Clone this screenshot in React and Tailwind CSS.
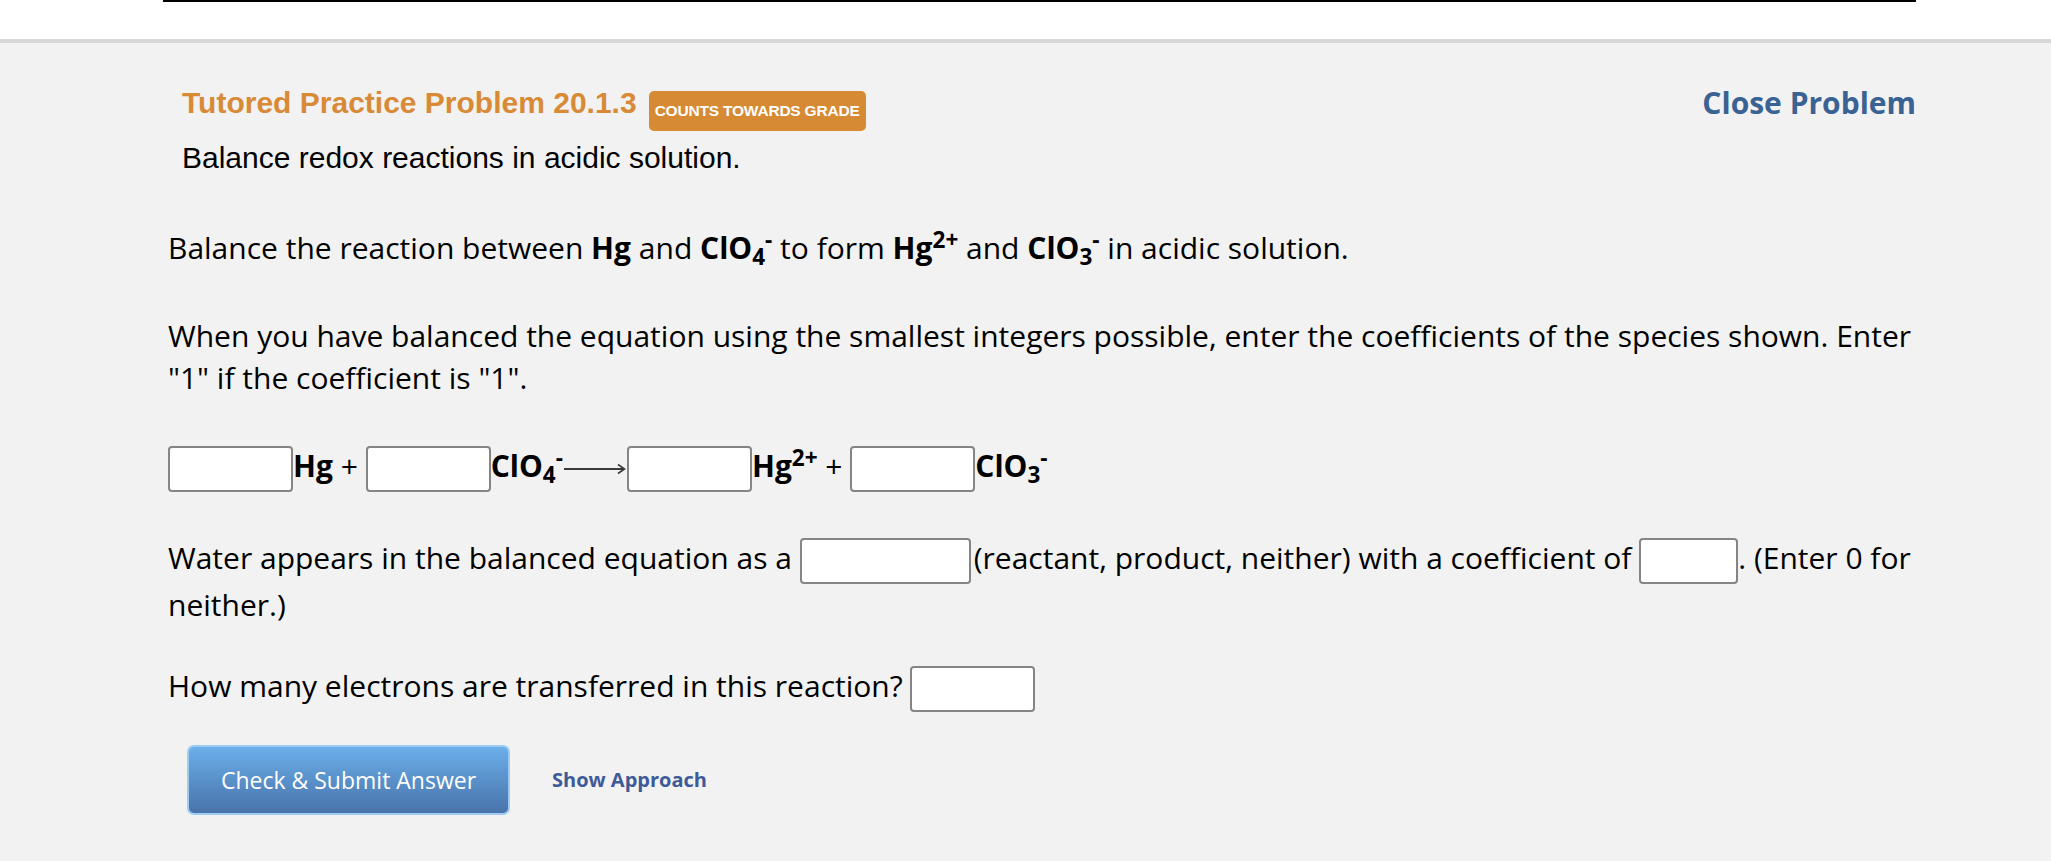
import React from 'react';
import clsx from 'clsx';

function Box({ className = 'w-[125px]' }) {
    return (
        <input
            type="text"
            className={clsx(
                'inline-block h-[46px] px-2 align-middle rounded-[4px] border-2 border-[#858585] bg-white outline-none',
                className
            )}
        />
    );
}

function Arrow() {
    return (
        <svg width="64" height="14" viewBox="0 0 64 14" className="inline-block align-middle">
            <path d="M1 7 H61" stroke="#3a3a3a" strokeWidth="1.8" fill="none" />
            <path d="M55 2.5 L61.5 7 L55 11.5" stroke="#3a3a3a" strokeWidth="1.6" fill="none" />
        </svg>
    );
}

export default function App() {
    return (
        <div className="min-h-screen bg-[#f2f2f2] text-black font-['Open_Sans',sans-serif]">
            <div className="bg-white h-[43px] border-b-4 border-[#d7d7d7]">
                <div className="ml-[163px] w-[1753px] h-[2px] bg-black" />
            </div>

            <div className="ml-[168px] w-[1748px] pt-[39px] pb-10">
                <div className="flex items-start justify-between">
                    <div className="flex items-start mt-[4px] pl-[14px]">
                        <h1 className="text-[30px] leading-[34px] font-bold text-[#d88a37] font-['Liberation_Sans',Arial,sans-serif]">
                            Tutored Practice Problem 20.1.3
                        </h1>
                        <span className="ml-[12px] mt-[5px] h-[40px] px-[6px] flex items-center rounded-[5px] bg-[#d68a33] text-white text-[15.5px] font-bold tracking-[-0.2px] font-['Liberation_Sans',Arial,sans-serif]">
                            COUNTS TOWARDS GRADE
                        </span>
                    </div>
                    <a className="text-[30px] leading-[41px] font-bold text-[#3a6293]">Close Problem</a>
                </div>

                <p className="mt-[10px] pl-[14px] text-[30px] leading-[34px] font-['Liberation_Sans',Arial,sans-serif]">
                    Balance redox reactions in acidic solution.
                </p>

                <div className="text-[30px] leading-[42px]">
                    <p className="mt-[52px]">
                        Balance the reaction between <b>Hg</b> and <b>ClO<sub>4</sub><sup>-</sup></b> to form{' '}
                        <b>Hg<sup>2+</sup></b> and <b>ClO<sub>3</sub><sup>-</sup></b> in acidic solution.
                    </p>

                    <p className="mt-[46px]">
                        When you have balanced the equation using the smallest integers possible, enter the
                        coefficients of the species shown. Enter "1" if the coefficient is "1".
                    </p>

                    <p className="mt-[46px]">
                        <Box /><b>Hg</b> + <Box /><b>ClO<sub>4</sub><sup>-</sup></b><Arrow /><Box />
                        <b>Hg<sup>2+</sup></b> + <Box /><b>ClO<sub>3</sub><sup>-</sup></b>
                    </p>

                    <p className="mt-[45px]">
                        Water appears in the balanced equation as a <Box className="w-[171px] mr-[3px]" />
                        (reactant, product, neither) with a coefficient of <Box className="w-[99px]" />. (Enter 0
                        for neither.)
                    </p>

                    <p className="mt-[39px]">
                        How many electrons are transferred in this reaction? <Box />
                    </p>
                </div>

                <div className="mt-[33px] ml-[19px] flex items-center">
                    <button className="w-[323px] h-[70px] rounded-[7px] border-2 border-[#9dcbf1] bg-linear-to-b from-[#6cafea] to-[#4873aa] text-white text-[23px]">
                        Check &amp; Submit Answer
                    </button>
                    <a className="ml-[42px] text-[20px] font-bold text-[#3e5a98]">Show Approach</a>
                </div>
            </div>
        </div>
    );
}
